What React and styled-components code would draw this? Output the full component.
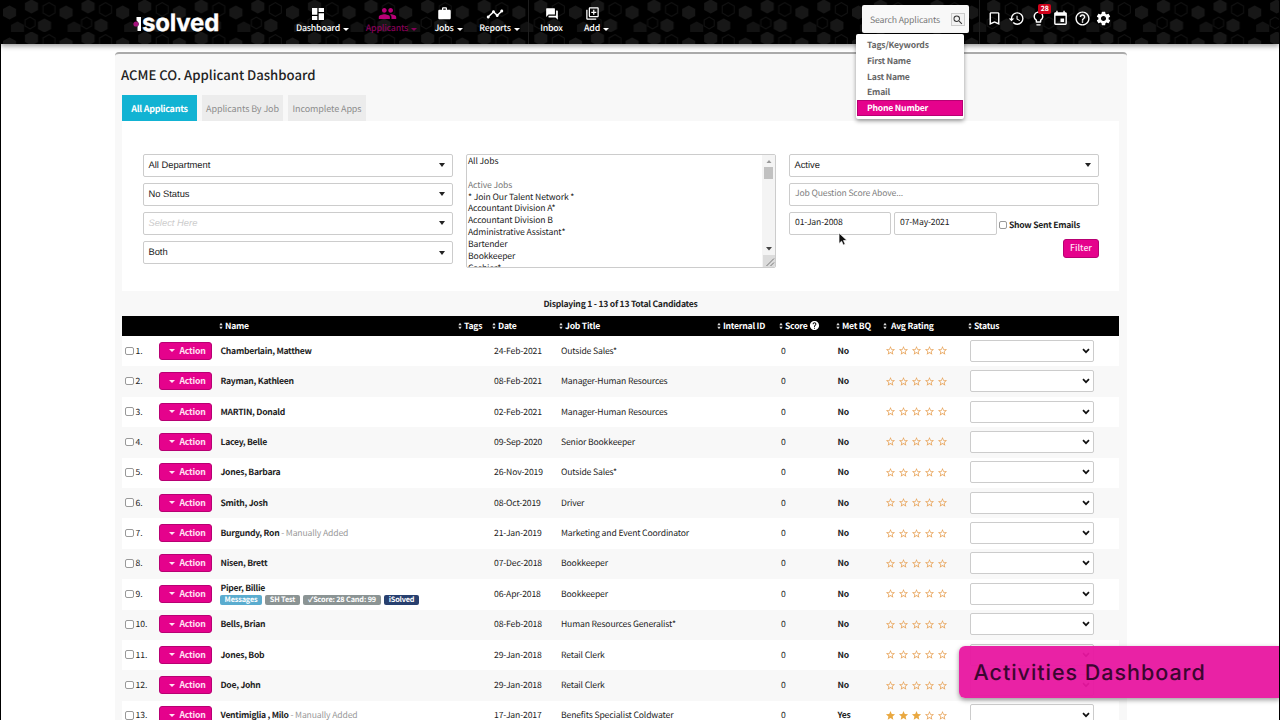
import React from 'react';
import styled, { createGlobalStyle, css } from 'styled-components';
import {
  MdDashboard, MdPeople, MdWork, MdTimeline, MdForum, MdOutlineLibraryAdd,
  MdBookmarkBorder, MdHistory, MdLightbulbOutline, MdEvent, MdHelpOutline,
  MdSettings, MdSearch, MdStar, MdStarBorder, MdHelp,
} from 'react-icons/md';

const sans = `"Noto Sans CJK SC", "Noto Sans", sans-serif`;
const PINK = '#e5028c';

const regularText = css`
  font-size: 8.6px;
  letter-spacing: -0.14px;
`;

const strongText = css`
  font-size: 8.6px;
  font-weight: 600;
  letter-spacing: -0.27px;
`;

const Global = createGlobalStyle`
  *, *::before, *::after { box-sizing: border-box; }
  body { margin: 0; background: #fff; font-family: ${sans}; color: #222; overflow: hidden; text-rendering: geometricPrecision; }
`;

const Page = styled.div`
  position: relative;
  height: 720px;
  overflow: hidden;
  border-left: 1px solid #000;
  border-right: 1px solid #000;
  background: #fff;
`;

const Header = styled.header`
  position: relative;
  z-index: 2;
  display: flex;
  height: 44px;
  background: #000;
  box-shadow: 0 2px 5px rgba(0, 0, 0, 0.4);
`;

const HexBackdrop = styled.svg`
  position: absolute;
  inset: 0;
  width: 100%;
  height: 100%;
`;

const Logo = styled.div`
  position: relative;
  display: flex;
  align-items: flex-start;
  width: 137px;
  margin-left: 132px;
  padding-top: 12px;
  svg { display: block; margin-top: 5px; }
  span {
    font: 700 24px/21px Inter, sans-serif;
    letter-spacing: -0.2px;
    color: #fff;
    -webkit-text-stroke: 0.3px #fff;
  }
`;

const Nav = styled.nav`
  position: relative;
  display: flex;
  width: 593px;
  height: 44px;
  padding-left: 13px;
`;

const NavItem = styled.div`
  display: flex;
  flex-direction: column;
  align-items: center;
  width: ${(p) => p.$w}px;
  padding-top: 6px;
  color: ${(p) => (p.$active ? '#b80076' : '#fff')};
  ${(p) => p.$divided && css`
    margin-left: 5px;
    border-left: 1px solid #1d1d1d;
  `}
`;

const NavIcon = styled.span`
  display: grid;
  place-items: center;
  width: 20px;
  height: 15px;
  svg { display: block; margin: -2px 0; }
`;

const NavLabel = styled.div`
  position: relative;
  font-size: 8.8px;
  letter-spacing: -0.2px;
  line-height: 13px;
  font-weight: 500;
  white-space: nowrap;
  ${(p) => p.$active && css`color: #860058;`}
  &::after {
    content: '';
    position: absolute;
    left: calc(100% + 3px);
    top: 6.5px;
    display: ${(p) => (p.$caret ? 'block' : 'none')};
    border: 3.3px solid transparent;
    border-top-color: currentColor;
    border-bottom: 0;
  }
`;

const SearchBox = styled.div`
  position: relative;
  display: flex;
  align-items: center;
  justify-content: space-between;
  width: 107px;
  height: 28px;
  margin: 5px 0 0 -1px;
  padding: 0 4px 0 8px;
  border-radius: 2px;
  background: #f8f8f8;
  color: #777;
  font-size: 8.7px;
  letter-spacing: -0.14px;
`;

const SearchButton = styled.span`
  display: grid;
  place-items: center;
  width: 14px;
  height: 13px;
  border: 1px solid #ccc;
  background: #f2f2f2;
  color: #333;
`;

const Tools = styled.div`
  position: relative;
  display: flex;
  align-items: flex-start;
  gap: 4.9px;
  margin-left: 10px;
  padding: 9.5px 0 0 6px;
  border-left: 1px solid #1d1d1d;
  color: #fff;
  svg { display: block; width: 17px; height: 17px; }
`;

const Tool = styled.span`
  position: relative;
`;

const Badge = styled.span`
  position: absolute;
  top: -6px;
  left: 8.5px;
  width: 13px;
  border-radius: 2px;
  background: #d0021b;
  color: #fff;
  font-size: 7px;
  line-height: 10px;
  font-weight: 700;
  text-align: center;
`;

const Menu = styled.ul`
  position: absolute;
  z-index: 5;
  top: 34px;
  left: 855px;
  width: 108px;
  height: 85px;
  margin: 0;
  padding: 3px 1px;
  list-style: none;
  background: #fff;
  border-radius: 2px;
  box-shadow: 0 2px 4px rgba(0, 0, 0, 0.4);
`;

const MenuItem = styled.li`
  height: 15.8px;
  padding-left: 10px;
  ${strongText}
  letter-spacing: -0.2px;
  line-height: 16.4px;
  color: ${(p) => (p.$selected ? '#fff' : '#666')};
  background: ${(p) => (p.$selected ? PINK : 'transparent')};
  box-shadow: ${(p) => (p.$selected ? 'inset 0 0 0 1px #b80073' : 'none')};
`;

const Panel = styled.main`
  width: 1012px;
  height: 680px;
  margin: 8px 0 0 114px;
  padding: 0 8px 0 7px;
  border-top: 2px solid #aaa;
  border-radius: 4px 4px 0 0;
  background: #f8f8f8;
`;

const Title = styled.h1`
  margin: 0 0 0 -1px;
  padding-top: 11px;
  height: 41px;
  font-size: 13.15px;
  line-height: 20px;
  font-weight: 500;
  color: #222;
`;

const Tabs = styled.div`
  display: flex;
  gap: 5px;
`;

const Tab = styled.div`
  width: ${(p) => p.$w}px;
  height: 26px;
  font-size: 9px;
  letter-spacing: ${(p) => (p.$active ? -0.27 : -0.1)}px;
  line-height: 27px;
  text-align: center;
  white-space: nowrap;
  color: ${(p) => (p.$active ? '#fff' : '#8c8c8c')};
  font-weight: ${(p) => (p.$active ? 600 : 400)};
  background: ${(p) => (p.$active ? '#12b3d3' : '#ececec')};
`;

const Filters = styled.section`
  display: grid;
  grid-template-columns: 310px 310px 310px;
  gap: 13px;
  height: 170px;
  padding: 33px 0 0 21px;
  background: #fff;
  align-items: start;
`;

const Stack = styled.div`
  display: flex;
  flex-direction: column;
  gap: 6.6px;
`;

const Field = styled.div`
  display: flex;
  align-items: center;
  justify-content: space-between;
  width: ${(p) => p.$w || 310}px;
  height: 22.5px;
  padding: 0 7px 2px ${(p) => (p.$plain ? 5 : 4.4)}px;
  border: 1px solid #ccc;
  border-radius: 2px;
  background: #fff;
  font-family: ${(p) => (p.$plain ? sans : '"Liberation Sans", sans-serif')};
  font-size: ${(p) => (p.$plain ? 8.6 : 9.4)}px;
  letter-spacing: ${(p) => (p.$plain ? '-0.14px' : 'normal')};
  font-style: ${(p) => (p.$hint ? 'italic' : 'normal')};
  color: ${(p) => (p.$hint ? '#ccc' : p.$muted ? '#808080' : '#222')};
`;

const Caret = styled.i`
  margin-top: 2px;
  border: 3.5px solid transparent;
  border-top: 4px solid #222;
  border-bottom: 0;
`;

const ListBox = styled.div`
  display: flex;
  height: 114px;
  border: 1px solid #ccc;
  border-radius: 2px;
  overflow: hidden;
`;

const Options = styled.div`
  flex: 1;
  padding-left: 1px;
  font-size: 8.6px;
  letter-spacing: -0.11px;
  line-height: 12px;
  color: #222;
  div { height: 11.87px; white-space: nowrap; }
`;

const GroupLabel = styled.div`
  color: #777;
`;

const Scrollbar = styled.div`
  display: flex;
  flex-direction: column;
  align-items: center;
  width: 13px;
  background: #f4f4f4;
  svg { display: block; }
`;

const Thumb = styled.div`
  width: 9px;
  height: 12px;
  background: #c1c1c1;
`;

const Inline = styled.div`
  display: flex;
  align-items: center;
  gap: 3px;
`;

const Check = styled.span`
  flex: none;
  width: 8.5px;
  height: 8.5px;
  border: 1px solid #999;
  border-radius: 2px;
  background: #fff;
`;

const CheckLabel = styled.label`
  display: flex;
  align-items: center;
  gap: 2px;
  margin-left: -1px;
  padding-top: 3px;
  ${strongText}
  white-space: nowrap;
`;

const FilterButton = styled.button`
  align-self: flex-end;
  width: 36px;
  height: 19px;
  margin-top: -2.3px;
  padding: 0;
  border: 1px solid #b80073;
  border-radius: 3px;
  background: ${PINK};
  color: #ffe3f4;
  font: 500 8.7px/16px ${sans};
`;

const Summary = styled.div`
  height: 25px;
  line-height: 26px;
  text-align: center;
  ${strongText}
  letter-spacing: -0.24px;
`;

const row = css`
  display: grid;
  grid-template-columns: 37px 61px 238px 34px 68px 157px 62px 56px 48px 85px 1fr;
  align-items: center;
  white-space: nowrap;
`;

const HeadRow = styled.div`
  ${row}
  height: 20px;
  background: #000;
  color: #fff;
  ${strongText}
  letter-spacing: -0.24px;
  padding-bottom: 1px;
  line-height: 18px;
`;

const HeadCell = styled.div`
  display: flex;
  align-items: center;
  gap: ${(p) => p.$gap || 2}px;
  margin-left: ${(p) => p.$shift || 0}px;
`;

const Row = styled.div`
  ${row}
  height: 30.4px;
  padding-bottom: 0.9px;
  background: ${(p) => (p.$even ? '#f8f8f8' : '#fff')};
  ${regularText}
  line-height: 12px;
`;

const Number = styled.div`
  display: flex;
  align-items: center;
  gap: 2px;
  padding-left: 3px;
  letter-spacing: 0;
`;

const ActionButton = styled.button`
  display: flex;
  align-items: center;
  justify-content: center;
  gap: 4px;
  width: 53px;
  height: 18px;
  padding: 0 0 0 4px;
  border: 1px solid #b80073;
  border-radius: 3px;
  background: ${PINK};
  color: #ffe3f4;
  font: 600 8.7px/14px ${sans};
  letter-spacing: -0.2px;
  &::before {
    content: '';
    border: 3px solid transparent;
    border-top-color: #ffe3f4;
    border-bottom: 0;
  }
`;

const Name = styled.div`
  padding-left: 0.5px;
  ${strongText}
  small { ${regularText} font-weight: 400; color: #999; }
`;

const Tags = styled.div`
  display: flex;
  gap: 3px;
  margin: 0.6px 0 0.6px -0.5px;
`;

const Tag = styled.span`
  width: ${(p) => p.$w}px;
  height: 10px;
  border-radius: 2px;
  background: ${(p) => p.$bg};
  color: #fff;
  font-size: 7.3px;
  letter-spacing: -0.15px;
  line-height: 10px;
  font-weight: 600;
  text-align: center;
`;

const Cell = styled.div`
  padding-left: ${(p) => p.$x || 0}px;
  ${(p) => p.$bold && strongText}
`;

const Stars = styled.div`
  display: flex;
  gap: 2px;
  padding-left: 2px;
  svg { width: 11px; height: 11px; color: #e9a862; }
  svg.on { color: #e9a840; }
`;

const StatusSelect = styled.div`
  display: flex;
  align-items: center;
  justify-content: flex-end;
  width: 124px;
  height: 22px;
  margin-left: 2px;
  padding-right: 3px;
  border: 1px solid #ccc;
  border-radius: 2px;
  background: #fff;
`;

const Banner = styled.div`
  position: absolute;
  z-index: 6;
  top: 646px;
  left: 958px;
  width: 321px;
  height: 52px;
  padding-left: 14.5px;
  border-radius: 6px 0 0 6px;
  background: rgba(232, 22, 160, 0.95);
  box-shadow: 0 2px 5px rgba(0, 0, 0, 0.4);
  color: #3c0630;
  font: 500 21.5px/55px Inter, sans-serif;
  letter-spacing: 0.97px;
  white-space: nowrap;
`;

const Pointer = styled.svg`
  position: absolute;
  z-index: 6;
  top: 232px;
  left: 837px;
`;

const SortIcon = () => (
  <svg width="4" height="8" viewBox="0 0 4 8" fill="#ddd">
    <path d="M2 .8 3.700 3.300H.3zM2 7.200.3 4.700h3.400z" />
  </svg>
);

const applicants = [
  ['Chamberlain, Matthew', '24-Feb-2021', 'Outside Sales*'],
  ['Rayman, Kathleen', '08-Feb-2021', 'Manager-Human Resources'],
  ['MARTIN, Donald', '02-Feb-2021', 'Manager-Human Resources'],
  ['Lacey, Belle', '09-Sep-2020', 'Senior Bookkeeper'],
  ['Jones, Barbara', '26-Nov-2019', 'Outside Sales*'],
  ['Smith, Josh', '08-Oct-2019', 'Driver'],
  ['Burgundy, Ron', '21-Jan-2019', 'Marketing and Event Coordinator', { manual: true }],
  ['Nisen, Brett', '07-Dec-2018', 'Bookkeeper'],
  ['Piper, Billie', '06-Apr-2018', 'Bookkeeper', { tags: true }],
  ['Bells, Brian', '08-Feb-2018', 'Human Resources Generalist*'],
  ['Jones, Bob', '29-Jan-2018', 'Retail Clerk'],
  ['Doe, John', '29-Jan-2018', 'Retail Clerk'],
  ['Ventimiglia , Milo', '17-Jan-2017', 'Benefits Specialist Coldwater', { manual: true, stars: 3, met: 'Yes' }],
];

const nav = [
  { label: 'Dashboard', Icon: MdDashboard, w: 70, size: 16, caret: true },
  { label: 'Applicants', Icon: MdPeople, w: 68, size: 19, caret: true, active: true },
  { label: 'Jobs', Icon: MdWork, w: 46, size: 15, caret: true },
  { label: 'Reports', Icon: MdTimeline, w: 56, size: 18, caret: true },
  { label: 'Inbox', Icon: MdForum, w: 46, size: 14, divided: true },
  { label: 'Add', Icon: MdOutlineLibraryAdd, w: 36, size: 15, caret: true },
];

const jobs = [
  '* Join Our Talent Network *', 'Accountant Division A*', 'Accountant Division B',
  'Administrative Assistant*', 'Bartender', 'Bookkeeper', 'Cashier*',
];

const HexPattern = () => (
  <HexBackdrop>
    <defs>
      <pattern id="hex" width="56.6" height="32" patternUnits="userSpaceOnUse">
        <g fill="#171717">
          <path d="M2 9 8.500 5.500 15 9v7l-6.500 3.500L2 16z" />
          <path d="M24 3l6.500-3.500L37 3v7l-6.500 3.500L24 10z" />
          <path d="M37 22l6.500-3.500L50 22v7l-6.500 3.500L37 29z" />
          <path d="M10 25l6.500-3.500L23 25v7l-6.500 3.500L10 32z" fill="#121212" />
        </g>
        <path d="M42 6l6-3.500L54 6v7l-6 3.500L42 13zM24 20l5-3 5 3v6l-5 3-5-3z" fill="none" stroke="#121212" />
      </pattern>
    </defs>
    <rect width="100%" height="100%" fill="url(#hex)" />
  </HexBackdrop>
);

export default function App() {
  return (
    <Page>
      <Global />
      <Header>
        <HexPattern />
        <Logo>
          <svg width="9" height="15" viewBox="0 0 9 15">
            <path d="M3.500 0H8v14H4.500V9.500a3.500 3.500 0 0 0 0-5L3.500 3.500z" fill="#fff" />
            <circle cx="3" cy="7" r="2.600" fill="#a5127c" />
          </svg>
          <span>solved</span>
        </Logo>
        <Nav>
          {nav.map(({ label, Icon, w, size, caret, active, divided }) => (
            <NavItem key={label} $w={w} $active={active} $divided={divided}>
              <NavIcon><Icon size={size} /></NavIcon>
              <NavLabel $caret={caret} $active={active}>{label}</NavLabel>
            </NavItem>
          ))}
        </Nav>
        <SearchBox>
          Search Applicants
          <SearchButton><MdSearch size={12} /></SearchButton>
        </SearchBox>
        <Tools>
          <Tool><MdBookmarkBorder /></Tool>
          <Tool><MdHistory /></Tool>
          <Tool><MdLightbulbOutline /><Badge>28</Badge></Tool>
          <Tool><MdEvent /></Tool>
          <Tool><MdHelpOutline /></Tool>
          <Tool><MdSettings /></Tool>
        </Tools>
      </Header>
      <Menu>
        {['Tags/Keywords', 'First Name', 'Last Name', 'Email', 'Phone Number'].map((t, i) => (
          <MenuItem key={t} $selected={i === 4}>{t}</MenuItem>
        ))}
      </Menu>

      <Panel>
        <Title>ACME CO. Applicant Dashboard</Title>
        <Tabs>
          <Tab $active $w={75}>All Applicants</Tab>
          <Tab $w={81}>Applicants By Job</Tab>
          <Tab $w={78}>Incomplete Apps</Tab>
        </Tabs>
        <Filters>
          <Stack>
            <Field>All Department<Caret /></Field>
            <Field>No Status<Caret /></Field>
            <Field $hint>Select Here<Caret /></Field>
            <Field>Both<Caret /></Field>
          </Stack>
          <ListBox>
            <Options>
              <div>All Jobs</div>
              <div />
              <GroupLabel>Active Jobs</GroupLabel>
              {jobs.map((j) => <div key={j}>{j}</div>)}
            </Options>
            <Scrollbar>
              <svg width="12" height="12" viewBox="0 0 12 12"><path d="M3.500 8 6 5l2.500 3z" fill="#999" /></svg>
              <Thumb />
              <svg width="12" height="76" viewBox="0 0 12 76"><path d="M3 68h6l-3 3.500z" fill="#444" /></svg>
              <svg width="12" height="12" viewBox="0 0 12 12">
                <rect width="12" height="12" fill="#dcdcdc" />
                <path d="M3.500 11 11 3.500M7.500 11 11 7.500" stroke="#777" />
              </svg>
            </Scrollbar>
          </ListBox>
          <Stack>
            <Field>Active<Caret /></Field>
            <Field $plain $muted>Job Question Score Above...</Field>
            <Inline>
              <Field $plain $w={102}>01-Jan-2008</Field>
              <Field $plain $w={102.5}>07-May-2021</Field>
              <CheckLabel><Check />Show Sent Emails</CheckLabel>
            </Inline>
            <FilterButton>Filter</FilterButton>
          </Stack>
        </Filters>
        <Summary>Displaying 1 - 13 of 13 Total Candidates</Summary>
        <HeadRow>
          <span />
          <span />
          <HeadCell $shift={-1}><SortIcon />Name</HeadCell>
          <HeadCell><SortIcon />Tags</HeadCell>
          <HeadCell><SortIcon />Date</HeadCell>
          <HeadCell $shift={-1}><SortIcon />Job Title</HeadCell>
          <HeadCell><SortIcon />Internal ID</HeadCell>
          <HeadCell><SortIcon />Score<MdHelp size={11} /></HeadCell>
          <HeadCell $shift={1}><SortIcon />Met BQ</HeadCell>
          <HeadCell $gap={4}><SortIcon />Avg Rating</HeadCell>
          <HeadCell><SortIcon />Status</HeadCell>
        </HeadRow>
        {applicants.map(([name, date, title, extra = {}], i) => (
          <Row key={name} $even={i % 2 === 1}>
            <Number><Check />{i + 1}.</Number>
            <ActionButton>Action</ActionButton>
            <Name>
              {name}{extra.manual && <small> - Manually Added</small>}
              {extra.tags && (
                <Tags>
                  <Tag $w={42} $bg="#5aaccf">Messages</Tag>
                  <Tag $w={35} $bg="#8b9494">SH Test</Tag>
                  <Tag $w={78} $bg="#8b9494">✓Score: 28 Cand: 99</Tag>
                  <Tag $w={35} $bg="#28406f">iSolved</Tag>
                </Tags>
              )}
            </Name>
            <span />
            <Cell $x={2}>{date}</Cell>
            <Cell $x={1}>{title}</Cell>
            <span />
            <Cell $x={2}>0</Cell>
            <Cell $x={2.5} $bold>{extra.met || 'No'}</Cell>
            <Stars>
              {[0, 1, 2, 3, 4].map((n) =>
                n < (extra.stars || 0) ? <MdStar key={n} className="on" /> : <MdStarBorder key={n} />
              )}
            </Stars>
            <StatusSelect>
              <svg width="8" height="6" viewBox="0 0 8 6">
                <path d="M1 1.200 4 4.200 7 1.200" fill="none" stroke="#111" strokeWidth="1.700" />
              </svg>
            </StatusSelect>
          </Row>
        ))}
      </Panel>

      <Pointer width="10" height="14" viewBox="0 0 10 14">
        <path d="M1 1v10.500l2.600-2.300 1.700 3.900 1.900-.9-1.700-3.700H9z" fill="#111" stroke="#fff" strokeWidth=".7" />
      </Pointer>
      <Banner>Activities Dashboard</Banner>
    </Page>
  );
}
